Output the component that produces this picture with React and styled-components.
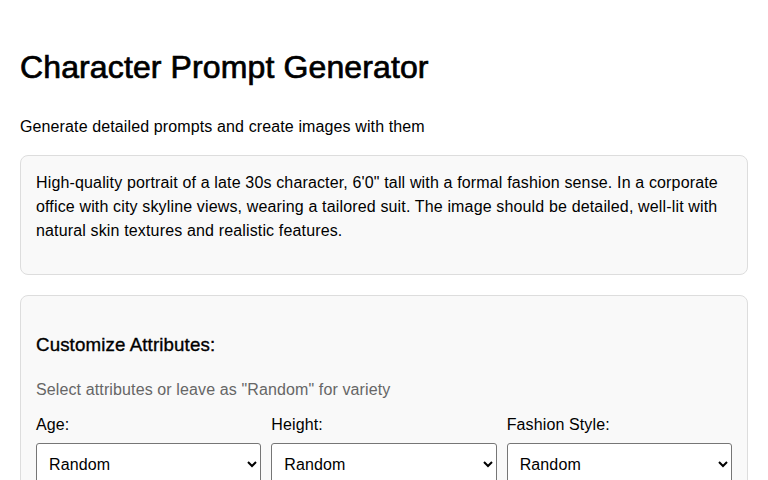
import React from 'react'
import styled, { createGlobalStyle } from 'styled-components'

const GlobalStyle = createGlobalStyle`
    body {
        margin: 0;
        background: #fff;
        font-family: "Liberation Sans", Arial, sans-serif;
        letter-spacing: 0.12px;
        color: #000;
    }
`

const Page = styled.div`
    padding: 20px;
`

const Title = styled.h1`
    font-size: 32px;
    font-weight: normal;
    -webkit-text-stroke: 0.7px #000;
    margin: 29px 0 32px;
`

const Subtitle = styled.p`
    font-size: 16px;
    margin: 0 0 19px;
`

const Panel = styled.div`
    background: #f9f9f9;
    border: 1px solid #ddd;
    border-radius: 8px;
    padding: 15px;
    margin-bottom: 20px;
    min-height: ${props => props.minH || 0}px;
    box-sizing: border-box;
`

const PromptText = styled.p`
    margin: 0;
    font-size: 16px;
    line-height: 24px;
    letter-spacing: 0.15px;
`

const Heading = styled.h3`
    font-size: 18.72px;
    font-weight: normal;
    -webkit-text-stroke: 0.35px #000;
    margin: 23px 0 25px;
`

const Hint = styled.p`
    color: #666;
    font-size: 16px;
    margin: 0 0 17px;
`

const Grid = styled.div`
    display: grid;
    grid-template-columns: repeat(3, 1fr);
    gap: 10px;
`

const Field = styled.div`
    display: flex;
    flex-direction: column;
`

const Label = styled.label`
    font-size: 16px;
    margin-bottom: 9px;
`

const Select = styled.select`
    font-family: "Liberation Sans", Arial, sans-serif;
    font-size: 16px;
    letter-spacing: 0.12px;
    padding: 11px 8px;
    border: 1px solid #767676;
    border-radius: 3px;
    background: #fff;
    width: 100%;
`

const fields = ['Age:', 'Height:', 'Fashion Style:']

export default function App() {
    return (
    <Page>
    <GlobalStyle />
    <Title>Character Prompt Generator</Title>
    <Subtitle>Generate detailed prompts and create images with them</Subtitle>
    <Panel minH={120}>
        <PromptText>
        High-quality portrait of a late 30s character, 6'0" tall with a formal fashion sense. In a corporate office with city skyline views, wearing a tailored suit. The image should be detailed, well-lit with natural skin textures and realistic features.
        </PromptText>
    </Panel>
    <Panel>
        <Heading>Customize Attributes:</Heading>
        <Hint>Select attributes or leave as "Random" for variety</Hint>
        <Grid>
        {fields.map(f => (
            <Field key={f}>
            <Label>{f}</Label>
            <Select defaultValue="Random">
                <option>Random</option>
            </Select>
            </Field>
        ))}
        </Grid>
    </Panel>
    </Page>
    )
}
